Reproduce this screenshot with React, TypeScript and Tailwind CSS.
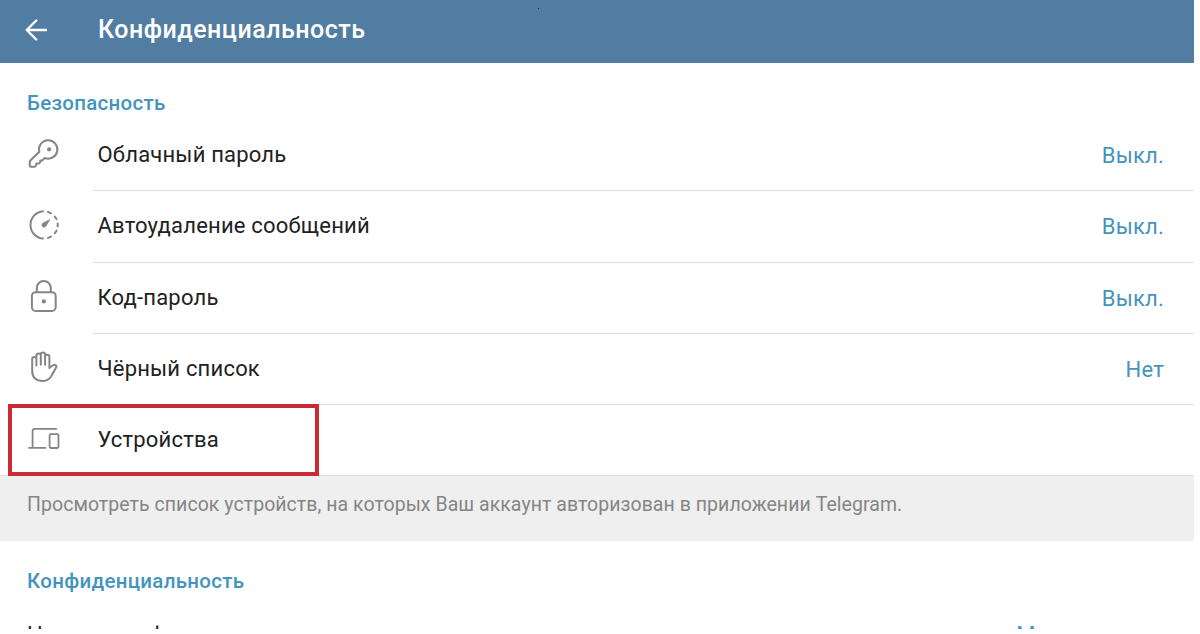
import React from 'react';

interface SettingRow {
    label: string;
    value?: string;
    icon: React.ReactNode;
    height: string;
}

const Icon: React.FC<{ children: React.ReactNode }> = ({ children }) => (
    <svg
        width="36"
        height="36"
        viewBox="0 0 36 36"
        fill="none"
        stroke="#858585"
        strokeWidth="2"
        strokeLinecap="round"
        strokeLinejoin="round"
        className="shrink-0"
    >
        {children}
    </svg>
);

const rows: SettingRow[] = [
    {
        label: 'Облачный пароль',
        value: 'Выкл.',
        height: 'h-[71px]',
        icon: (
            <Icon>
                <path d="M13.3 15.8 L4.4 24.5 Q3.8 25.2 3.8 26 V29.8 Q3.8 30.8 4.8 30.8 H8.8 L10.2 29.4 V27.6 H12.8 L14.3 26.1 V24.4 H16.1 L18.8 22 A9.2 9.2 0 1 0 13.3 15.8 Z" />
                <circle cx="23.1" cy="13.3" r="2.1" fill="#858585" stroke="none" />
            </Icon>
        ),
    },
    {
        label: 'Автоудаление сообщений',
        value: 'Выкл.',
        height: 'h-[72px]',
        icon: (
            <Icon>
                <path d="M17 4.3 A13.7 13.7 0 0 0 17 31.6" />
                <path d="M22 4.9 L25 6.3 M28.7 9.5 L30.6 12.2 M31.7 16.4 V19.4 M30.6 23.6 L28.7 26.3 M25 29.6 L22 30.9" />
                <path
                    d="M23.5 12.8 L17 16.1 A2.2 2.2 0 1 0 20 19.1 Z"
                    fill="#858585"
                    strokeWidth="0.8"
                />
            </Icon>
        ),
    },
    {
        label: 'Код-пароль',
        value: 'Выкл.',
        height: 'h-[71px]',
        icon: (
            <Icon>
                <rect x="5.9" y="13.2" width="23.8" height="18.8" rx="3.8" />
                <path d="M10.8 13 V9 A7 7 0 0 1 24.8 9 V13" />
                <circle cx="17.8" cy="22.4" r="2.1" fill="#858585" stroke="none" />
            </Icon>
        ),
    },
    {
        label: 'Чёрный список',
        value: 'Нет',
        height: 'h-[71px]',
        icon: (
            <Icon>
                <path
                    d="M6.2 21 V9.2 A2.1 2.1 0 0 1 10.4 9.2 V15.5 M10.4 15.5 V5.7 A2.1 2.1 0 0 1 14.8 5.7 V14.8 M14.8 14.8 V4.7 A2.1 2.1 0 0 1 19.1 4.7 V14.8 M19.1 14.8 V6.8 A2.1 2.1 0 0 1 23.4 6.8 V18 L27 15.3 C29.4 14.1 31.3 15.8 30.1 17.6 L26.2 24.6 C24 29.2 21.2 31 16.9 31 C10.2 31 6.2 27.7 6.2 21"
                />
            </Icon>
        ),
    },
    {
        label: 'Устройства',
        height: 'h-[70px]',
        icon: (
            <Icon>
                <path strokeWidth="1.8" d="M30.3 7.8 H8.7 Q6.6 7.8 6.6 9.9 V26.6 M3 26.8 H19.5" />
                <rect x="23.6" y="13.2" width="8.9" height="13.8" rx="1.4" strokeWidth="1.8" />
            </Icon>
        ),
    },
];

const SectionTitle: React.FC<{ children: React.ReactNode }> = ({ children }) => (
    <h2 className="pl-[27px] text-[20.5px] leading-6 font-medium tracking-[0.3px] text-[#4494bd]">{children}</h2>
);

const Row: React.FC<{ row: SettingRow; last: boolean }> = ({ row, last }) => (
    <div className={`ml-[26px] flex ${row.height}`}>
        <div className="flex h-[68px] w-[67px] shrink-0 items-center">{row.icon}</div>
        <div className={`flex flex-1 pr-[30px] pl-[4.5px] text-[22px] ${last ? '' : 'border-b border-[#dedede]'}`}>
            <div className="flex h-[68px] flex-1 items-center justify-between">
                <span className="tracking-[0.2px] text-[#212121]">{row.label}</span>
                {row.value && <span className="pt-[3px] tracking-[0.2px] text-[#4494bd]">{row.value}</span>}
            </div>
        </div>
    </div>
);

const App: React.FC = () => {
    return (
        <div className="h-[634px] w-[1200px] overflow-hidden bg-white font-['Roboto',sans-serif]">
            <div className="h-[629px] w-[1194px] overflow-hidden">
                <header className="relative flex h-[63px] items-center bg-[#527da3] pb-[3px] pl-[25px]">
                    <svg
                        width="22"
                        height="22"
                        viewBox="0 0 22 22"
                        fill="none"
                        stroke="white"
                        strokeWidth="2.4"
                        strokeLinecap="round"
                        strokeLinejoin="round"
                    >
                        <path d="M21.3 11 H2 M11.2 1.5 L1.7 11 L11.2 20.5" />
                    </svg>
                    <h1 className="pl-[51px] text-[25px] font-medium tracking-[0.5px] text-white">Конфиденциальность</h1>
                    <span className="absolute top-[8px] left-[538px] size-px bg-[#172b3d]" />
                </header>

                <section className="pt-7">
                    <SectionTitle>Безопасность</SectionTitle>
                    <div className="mt-[5px]">
                        {rows.map((row, index) => (
                            <Row key={row.label} row={row} last={index === rows.length - 1} />
                        ))}
                    </div>
                </section>

                {/* Hint under the devices row */}
                <div className="h-[66px] border-t border-[#dedede] bg-[#efefef] pt-[17px] pl-[27px] text-[19.5px] leading-6 tracking-[0.05px] text-[#858585]">
                    Просмотреть список устройств, на которых Ваш аккаунт авторизован в приложении Telegram.
                </div>

                <section className="pt-7">
                    <SectionTitle>Конфиденциальность</SectionTitle>
                    <div className="mt-[26px] flex justify-between pr-[29px] pl-[27px] text-[22px] leading-8">
                        <span className="tracking-[0.25px] text-[#212121]">Номер телефона</span>
                        <span className="text-[#4494bd]">Мои контакты</span>
                    </div>
                </section>
            </div>

            {/* Highlight around the devices row */}
            <div className="absolute top-[404px] left-[8px] h-[72px] w-[311px] border-4 border-[#cb2a30]" />
        </div>
    );
};

export default App;
